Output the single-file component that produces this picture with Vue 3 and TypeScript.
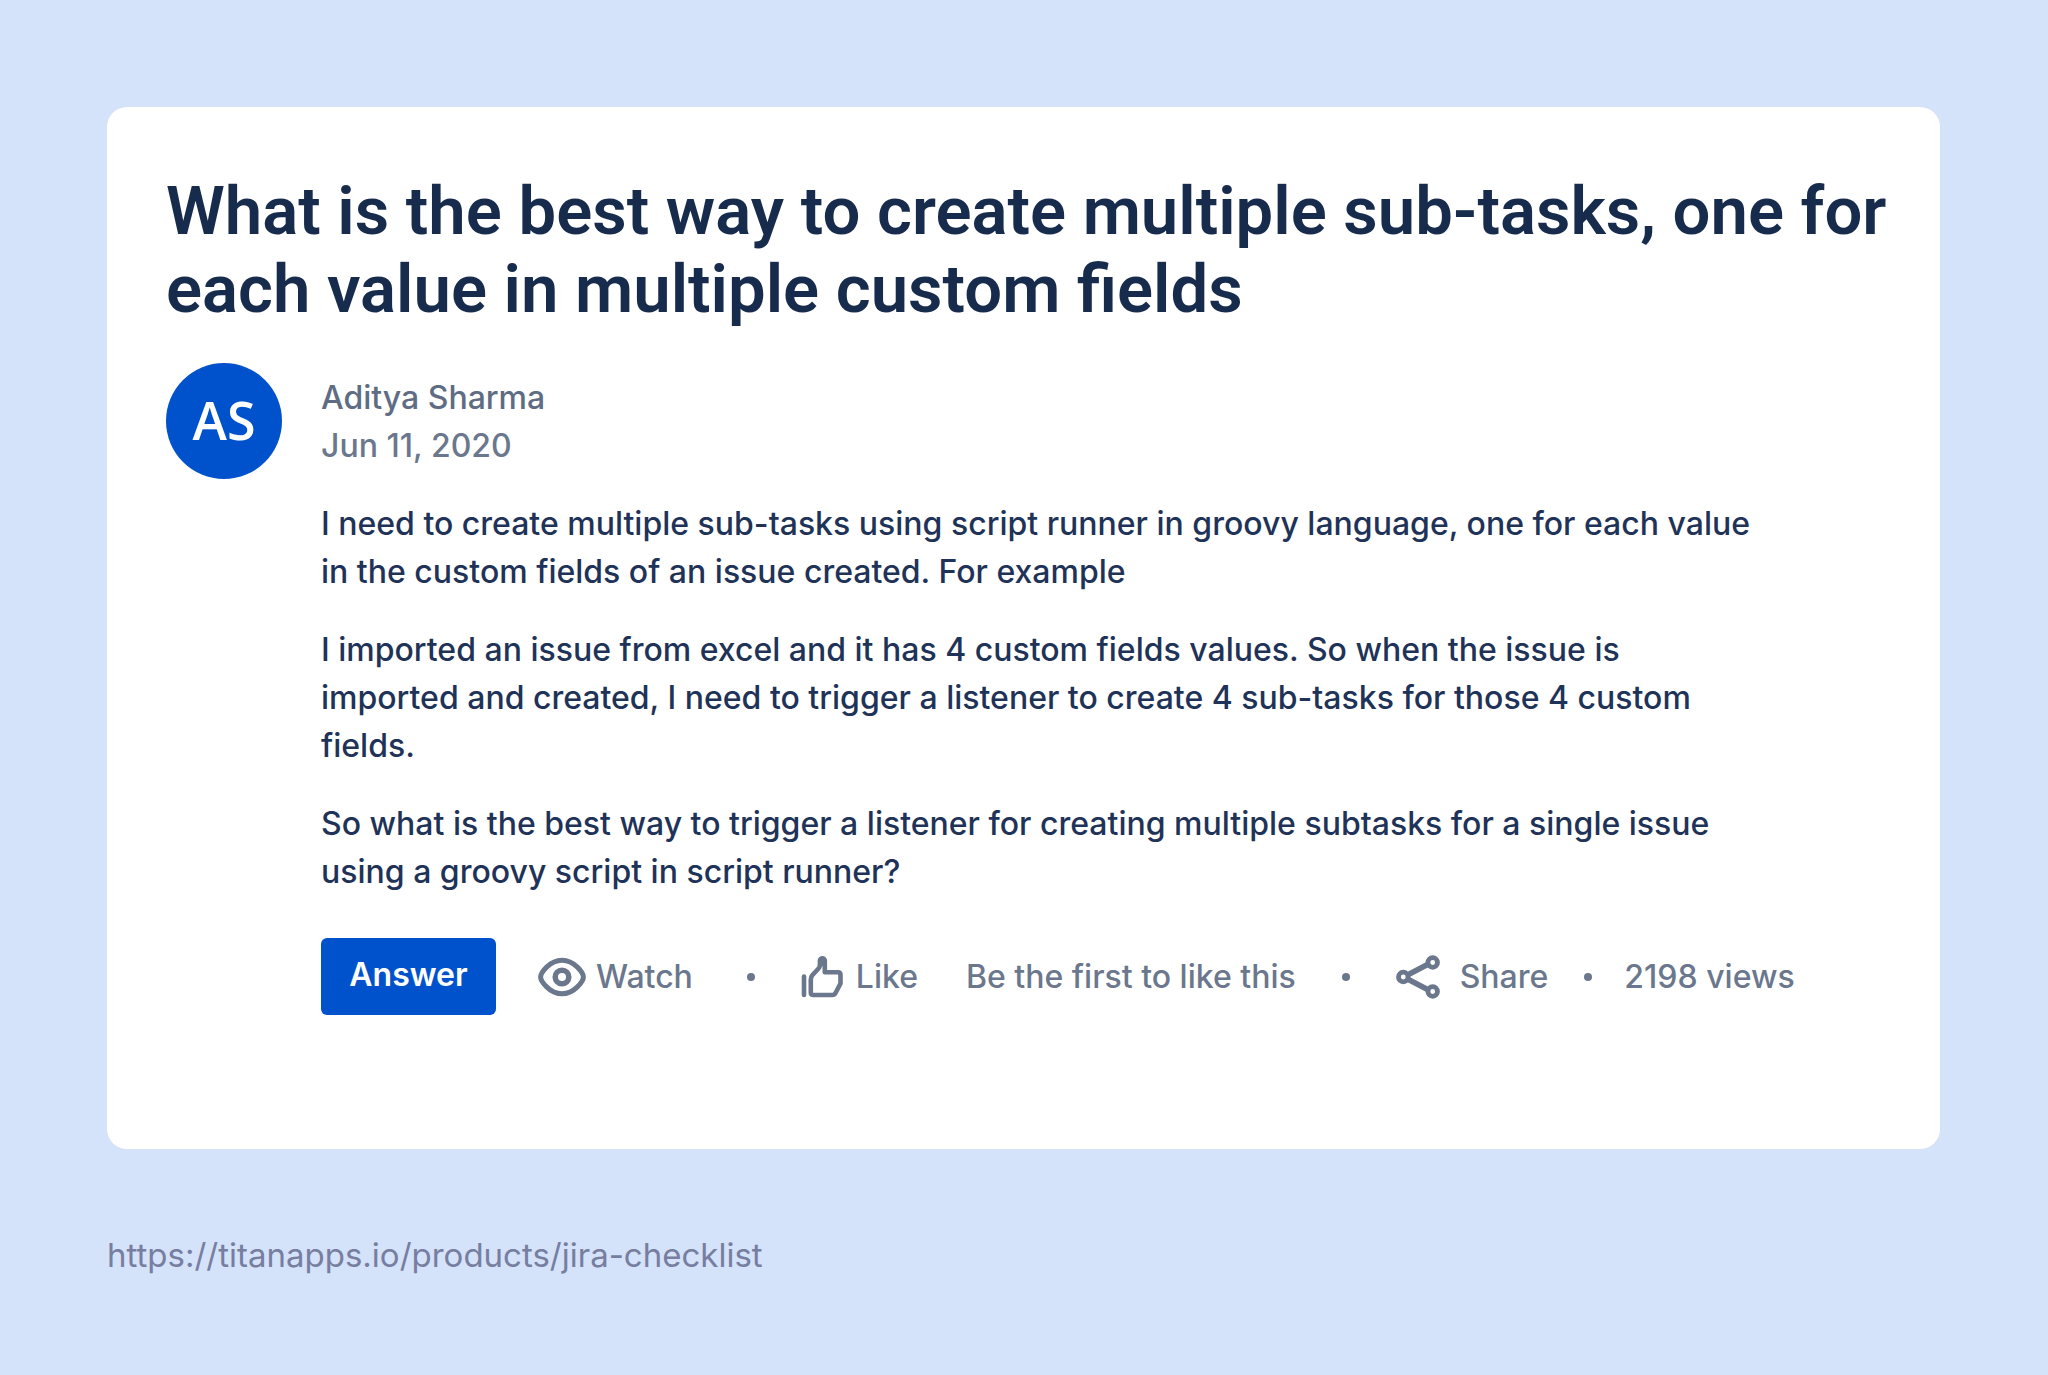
<script setup lang="ts">
const paragraphs: string[][] = [
  ['I need to create multiple sub-tasks using script runner in groovy language, one for each value', 'in the custom fields of an issue created. For example'],
  ['I imported an issue from excel and it has 4 custom fields values. So when the issue is', 'imported and created, I need to trigger a listener to create 4 sub-tasks for those 4 custom', 'fields.'],
  ['So what is the best way to trigger a listener for creating multiple subtasks for a single issue', 'using a groovy script in script runner?'],
]
</script>

<template>
  <main class="page">
    <article class="card">
      <h1>What is the best way to create multiple sub-tasks, one for<br />each value in multiple custom fields</h1>
      <div class="post">
        <div class="avatar">AS</div>
        <div class="content">
          <div class="author">Aditya Sharma</div>
          <div class="date">Jun 11, 2020</div>
          <p v-for="(lines, i) in paragraphs" :key="i">
            <template v-for="(line, j) in lines" :key="j"><br v-if="j > 0" />{{ line }}</template>
          </p>
          <div class="actions">
            <button class="answer" type="button">Answer</button>
            <button class="action watch" type="button">
              <svg width="48" height="40" viewBox="0 0 48 40" fill="none" stroke="currentColor" stroke-width="5">
                <path d="M2.6 20C2.6 16 11.500 3.200 24 3.200S45.400 16 45.400 20 36.500 36.800 24 36.800 2.600 24 2.600 20Z" />
                <circle cx="24" cy="20" r="6.800" stroke-width="5.500" />
              </svg>
              Watch
            </button>
            <span class="dot after-watch"></span>
            <button class="action like" type="button">
              <svg width="42" height="42" viewBox="0 0 42 42" fill="none" stroke="currentColor" stroke-width="4.600" stroke-linejoin="round" stroke-linecap="round">
                <path d="M3 20.500V39" />
                <path d="M23.800 16.300H37Q39.500 16.300 39.500 19V27.500L34.500 37Q33.400 39 31.500 39H12.300Q9.800 39 9.800 36.500V23.500Q9.800 21 11.500 19L17.300 12.800Q18.900 11 18.900 9V4.700C18.900 1.500 23.800 1.500 23.800 4.700Z" />
                <path d="M21.400 4V8" />
              </svg>
              Like
            </button>
            <span class="first">Be the first to like this</span>
            <span class="dot"></span>
            <button class="action share" type="button">
              <svg width="44" height="44" viewBox="0 0 44 44" fill="none" stroke="currentColor" stroke-width="4.800">
                <path d="M11 20.300 32.500 9M11 23.700l21.500 11.300" stroke-width="5.500" />
                <circle cx="7.300" cy="22" r="4.800" /><circle cx="36.700" cy="7.500" r="4.800" /><circle cx="36.700" cy="36.500" r="4.800" />
              </svg>
              Share
            </button>
            <span class="dot after-share"></span>
            <span class="views">2198 views</span>
          </div>
        </div>
      </div>
    </article>
    <a class="source" href="https://titanapps.io/products/jira-checklist">https://titanapps.io/products/jira-checklist</a>
  </main>
</template>

<style>
body { background: #d4e2fa; }
</style>

<style scoped>
.page { box-sizing: border-box; min-height: 100vh; padding: 107px 108px 80px 107px; background: #d4e2fa; font-family: Inter, "Liberation Sans", sans-serif; }
.card { box-sizing: border-box; padding: 65px 59px 134px; border-radius: 20px; background: #fff; color: #172b4d; }
h1 { margin: 0; font-family: Roboto, sans-serif; font-size: 67px; line-height: 78px; font-weight: 600; white-space: nowrap; }
.post { display: flex; gap: 39px; margin-top: 35px; }
.avatar { box-sizing: border-box; display: flex; align-items: center; justify-content: center; flex: none; width: 116px; height: 116px; padding-bottom: 4px; border-radius: 50%; background: #0052cc; color: #fff; font: 600 52px "Open Sans", sans-serif; }
.content { flex: 1; padding-top: 11px; font-size: 32px; font-weight: 500; line-height: 48px; white-space: nowrap; }
.author { color: #5e6c84; }
.date { color: #6b778c; }
p { margin: 30px 0 0; color: #1f3358; }
.actions { display: flex; align-items: center; margin-top: 42px; color: #6b778c; }
button { padding: 0; border: 0; background: none; color: inherit; font: inherit; cursor: pointer; }
.answer { width: 175px; height: 77px; padding-bottom: 4px; border-radius: 6px; background: #0052cc; color: #fff; font-weight: 600; }
.action { display: flex; align-items: center; gap: 10px; }
.watch { margin-left: 42px; }
.like { gap: 13px; }
.share { gap: 20px; }
.dot { width: 8px; height: 8px; margin: 0 46px; border-radius: 50%; background: #6b778c; }
.after-watch { margin-left: 54px; }
.after-share { margin: 0 32px 0 36px; }
.first { margin-left: 48px; }
.source { display: inline-block; margin-top: 84px; color: #777e9f; font-size: 33px; line-height: 44px; text-decoration: none; }
</style>
